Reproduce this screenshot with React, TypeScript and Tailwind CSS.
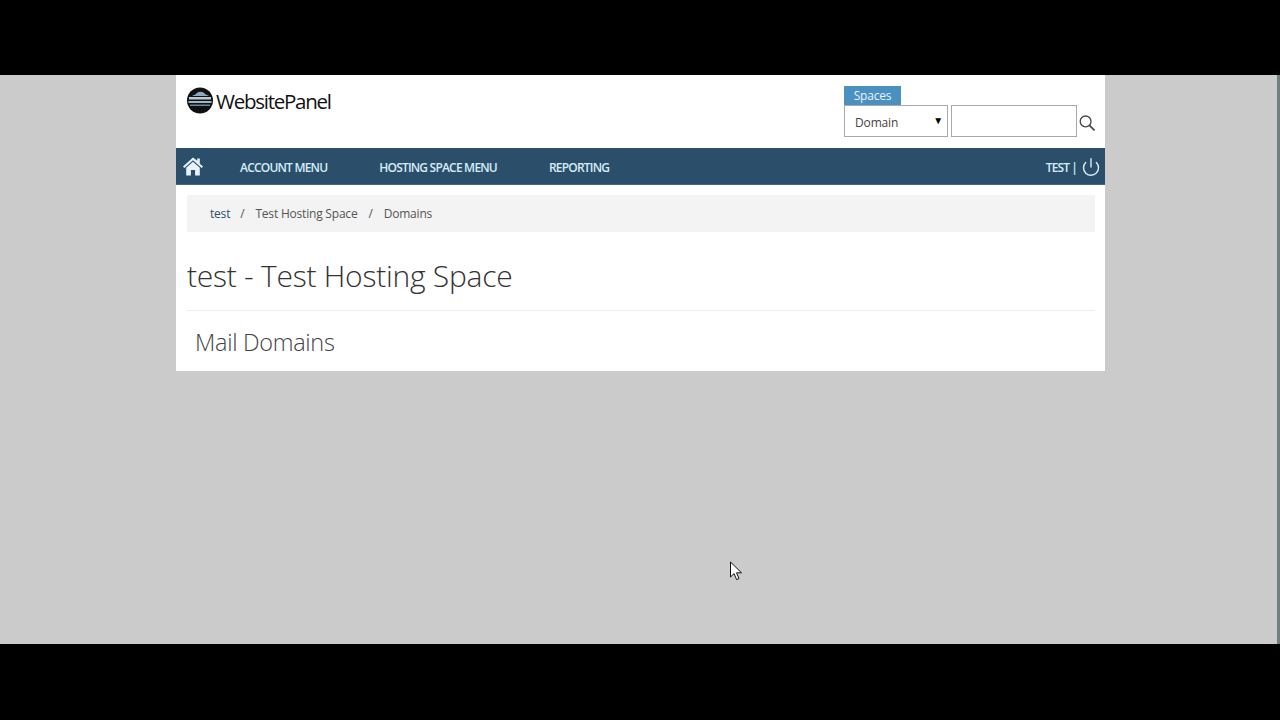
import { Power } from "lucide-react";

function Logo() {
  return (
    <div className="flex items-center gap-[2px]">
      <svg width="28" height="27" viewBox="0 0 28 27">
        <circle cx="14" cy="13.5" r="13" fill="#111" />
        <path d="M6 9c1-1 3-1 4-2 2-3 7-3 9 0 1 1 3 1 4 2z" fill="#8fa9bc" />
        <rect x="3" y="10" width="22" height="2.5" fill="#b9cbd8" />
        <rect x="2.5" y="14" width="23" height="2" fill="#9fb5c5" />
        <rect x="4" y="17.5" width="20" height="1.5" fill="#6f8898" />
      </svg>
      <span className="mt-[1px] text-[20.5px] leading-none tracking-[-1.25px] text-[#111]">
        WebsitePanel
      </span>
    </div>
  );
}

function NavLink({ label }: { label: string }) {
  return <span className="text-[12px] font-semibold tracking-[-0.8px] text-[#d6ecf8]">{label}</span>;
}

export default function App() {
  return (
    <div className="relative flex h-[720px] w-[1280px] flex-col overflow-hidden bg-black font-['Open_Sans',sans-serif]">
      <div className="h-[75px] shrink-0 bg-black" />
      <div className="flex h-[569px] shrink-0 bg-[#cbcbcb]">
        <div className="ml-[176px] h-[296px] w-[929px] bg-white">
          <header className="flex h-[73px] justify-between px-[10px]">
            <div className="pt-[12px]">
              <Logo />
            </div>
            <div className="flex flex-col items-start pt-[11px]">
              <div className="flex h-[19px] w-[57px] items-center justify-center bg-[#4a90c0] pt-[1px] text-[12px] tracking-[-0.2px] text-[#e8f3fa]">
                Spaces
              </div>
              <div className="flex items-center">
                <div className="flex h-[32px] w-[104px] items-center justify-between border border-[#a9a9a9] pl-[10px] pr-[4px] pt-[3px] text-[12px] tracking-[-0.15px] text-[#444]">
                  <span>Domain</span>
                  <span className="mb-[4px] text-[10px] text-black">▼</span>
                </div>
                <div className="ml-[3px] h-[32px] w-[126px] border border-[#a9a9a9]" />
                <svg className="ml-[2px] mt-[3px]" width="16" height="16" viewBox="0 0 16 16" fill="none" stroke="#444" strokeWidth="1.3">
                  <circle cx="6.6" cy="6.4" r="5.4" />
                  <path d="M10.5 10.4l5 5" strokeWidth="1.7" />
                </svg>
              </div>
            </div>
          </header>

          <nav className="flex h-[37px] items-center border-b border-[#3d6a88] bg-[#2b4f6b] pl-[7px] pr-[4px]">
            <svg width="20" height="19" viewBox="0 0 20 19" fill="#e6f3fb">
              <path d="M10 0.5L0 9.6l1.3 1.3L10 3.2l8.7 7.7 1.3-1.3-3.2-2.9V1.5h-2.6v2.3z" />
              <path d="M10 4.8l-6.8 6v7.7h4.7v-5.6h4.2v5.6h4.7v-7.7z" />
            </svg>
            <div className="ml-[37px] flex gap-[52px] pt-[3px]">
              <NavLink label="ACCOUNT MENU" />
              <NavLink label="HOSTING SPACE MENU" />
              <NavLink label="REPORTING" />
            </div>
            <div className="ml-auto flex items-center gap-[4px]">
              <span className="pt-[3px] text-[12px] font-semibold tracking-[-0.9px] text-[#d6ecf8]">TEST |</span>
              <Power className="mt-[1px] h-[20px] w-[20px] text-[#d6ecf8]" strokeWidth={1.7} />
            </div>
          </nav>

          <div className="mx-[11px] mt-[10px] flex h-[37px] w-[908px] items-center bg-[#f3f3f3] pl-[23px] text-[12px] tracking-[-0.2px] text-[#555]">
            <span className="text-[#2b4f6b]">test</span>
            <span className="ml-[10px] mr-[11px]">/</span>
            <span>Test Hosting Space</span>
            <span className="mx-[11px]">/</span>
            <span>Domains</span>
          </div>

          <h1 className="ml-[11px] mt-[24px] h-[40px] text-[30px] font-light leading-[40px] tracking-[-0.25px] text-[#333]">
            test - Test Hosting Space
          </h1>
          <div className="mx-[11px] mt-[14px] h-px w-[908px] bg-[#eeeeee]" />
          <h2 className="ml-[19px] mt-[16px] text-[23.5px] font-light leading-[30px] tracking-[-0.3px] text-[#444]">
            Mail Domains
          </h2>
        </div>
      </div>
      <div className="flex-1 bg-black" />

      <div className="absolute right-0 top-[75px] h-[569px] w-[3px] bg-[#6f7f80]" />

      <svg className="absolute left-[729px] top-[561px]" width="14" height="20" viewBox="0 0 14 20">
        <path d="M1.5 1v15l3.6-3.4 2.5 6 2.4-1-2.5-5.8h5z" fill="#fff" stroke="#111" strokeWidth="1" strokeLinejoin="round" />
      </svg>
    </div>
  );
}
